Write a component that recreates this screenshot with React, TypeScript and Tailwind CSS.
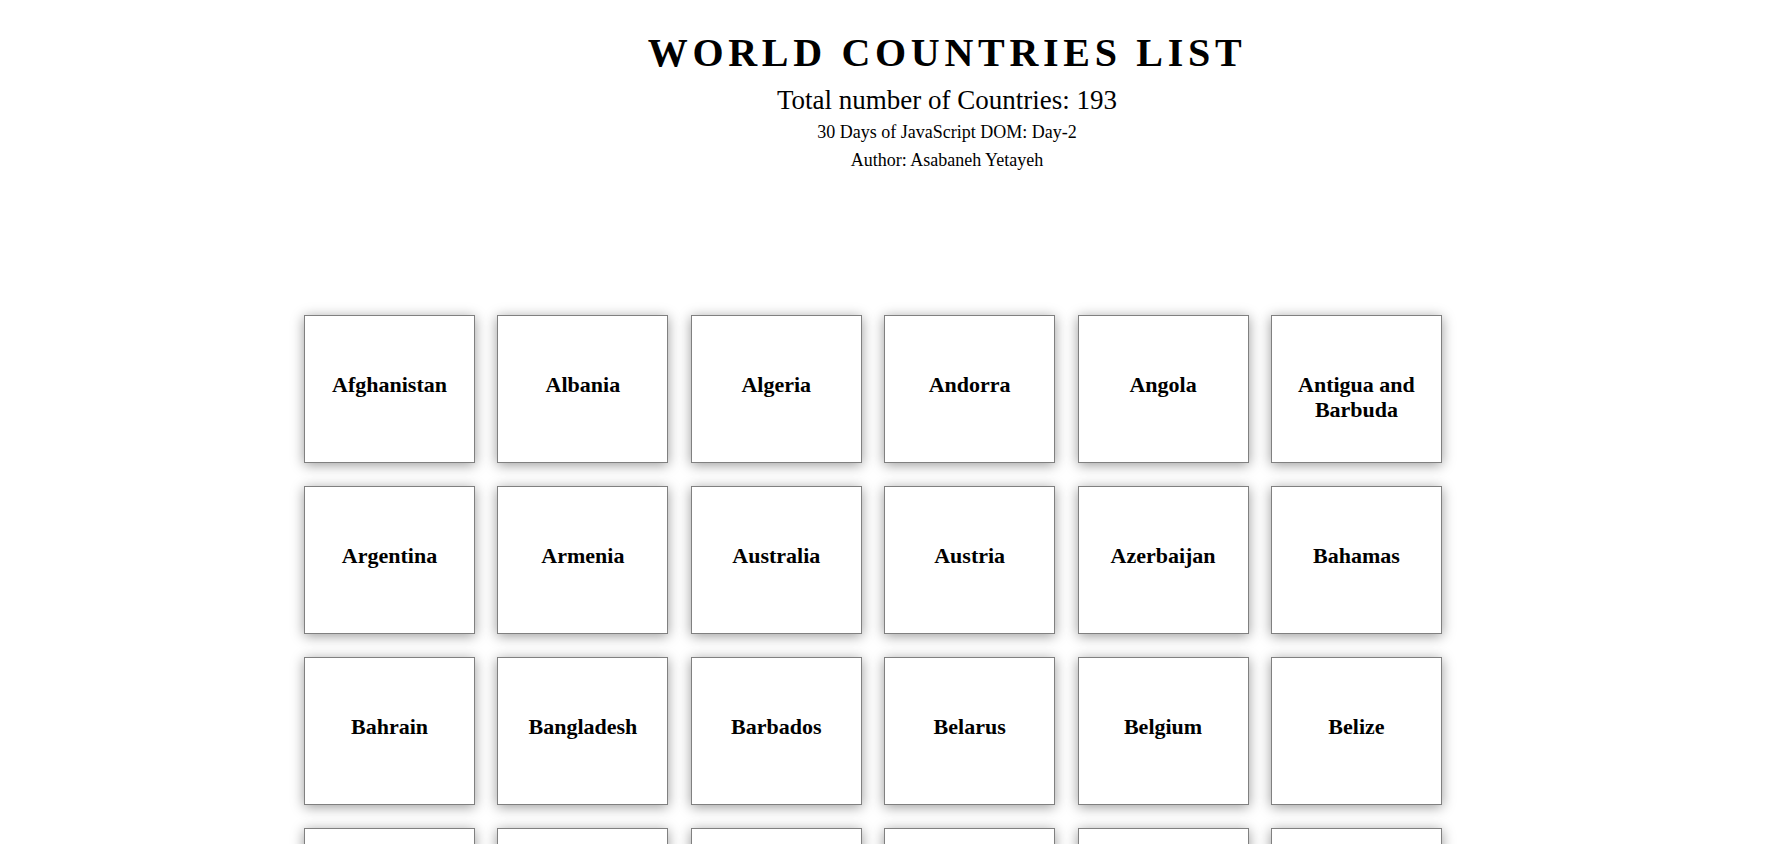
import React from "react";

const countries = [
  "Afghanistan","Albania","Algeria","Andorra","Angola","Antigua and Barbuda",
  "Argentina","Armenia","Australia","Austria","Azerbaijan","Bahamas",
  "Bahrain","Bangladesh","Barbados","Belarus","Belgium","Belize",
  "Benin","Bhutan","Bolivia","Bosnia and Herzegovina","Botswana","Brazil",
  "Brunei","Bulgaria","Burkina Faso","Burundi","Cabo Verde","Cambodia",
];

export default function App() {
  return (
    <div className="min-h-screen bg-white text-black" style={{ fontFamily: '"Liberation Serif", "Times New Roman", serif' }}>
      <header className="pl-[102px] pt-[30px] text-center">
        <h1 className="text-[40px] font-bold leading-[46px] tracking-[4.7px]">WORLD COUNTRIES LIST</h1>
        <h2 className="text-[27px] leading-[31px] mt-[9px]">Total number of Countries: 193</h2>
        <p className="text-[18px] leading-[21px] mt-[6px]">30 Days of JavaScript DOM: Day-2</p>
        <p className="text-[18px] leading-[21px] mt-[7px]">Author: Asabaneh Yetayeh</p>
      </header>
      <main className="ml-[304px] mt-[144px] grid grid-cols-[repeat(6,171px)] gap-x-[22.4px] gap-y-[23px] pb-10">
        {countries.map((c) => (
          <div
            key={c}
            className="h-[148px] border border-[#808080] bg-white shadow-[0_2px_12px_rgba(0,0,0,0.4)] px-3 pt-[56px] text-center"
          >
            <h3 className="text-[22px] font-bold leading-[25px]">{c}</h3>
          </div>
        ))}
      </main>
    </div>
  );
}
